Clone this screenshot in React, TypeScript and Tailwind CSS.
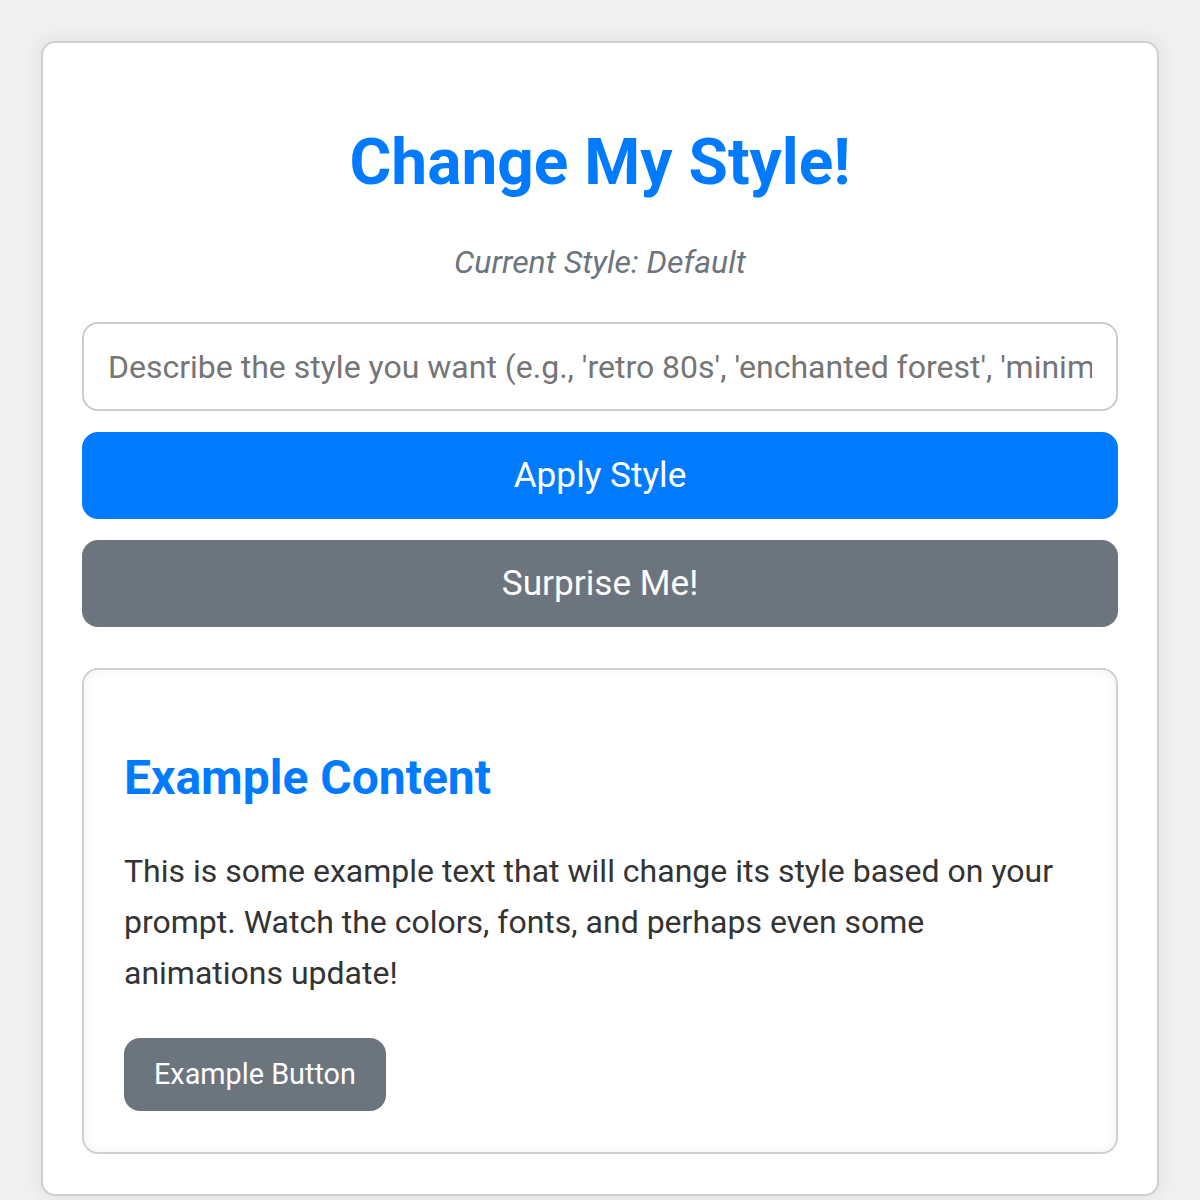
import React from "react";

export default function App() {
  return (
    <div
      className="min-h-[1200px] w-full bg-[#f0f0f0] px-[41px] pt-[41px] pb-[40px]"
      style={{ fontFamily: "Roboto, 'Liberation Sans', sans-serif" }}
    >
      <div className="rounded-[14px] border-2 border-[#cfcfcf] bg-white px-[39px] pt-[40px] pb-[40px] shadow-[0_0_20px_rgba(0,0,0,0.08)]">
        <h1 className="mt-[42px] mb-[43px] text-center text-[64px] leading-[75px] font-bold text-[#007bff]">
          Change My Style!
        </h1>
        <p className="mb-[41px] text-center text-[32px] leading-[38px] italic text-[#6c757d]">
          Current Style: Default
        </p>
        <input
          type="text"
          placeholder="Describe the style you want (e.g., 'retro 80s', 'enchanted forest', 'minimalist dark')"
          className="block h-[89px] w-full rounded-[16px] border-2 border-[#cccccc] bg-white px-[24px] text-[32px] text-[#333] placeholder:text-[#757575] outline-none"
        />
        <button className="mt-[21px] flex h-[87px] w-full items-center justify-center rounded-[16px] bg-[#007bff] text-[35.2px] text-white">
          Apply Style
        </button>
        <button className="mt-[21px] flex h-[87px] w-full items-center justify-center rounded-[16px] bg-[#6c757d] text-[35.2px] text-white">
          Surprise Me!
        </button>
        <div className="mt-[41px] rounded-[16px] border-2 border-[#d0d0d0] bg-white px-[40px] pt-[40px] pb-[41px] shadow-[inset_0_0_12px_rgba(0,0,0,0.06)]">
          <h2 className="mt-[40px] mb-[40px] text-[48px] leading-[56px] font-bold text-[#007bff]">
            Example Content
          </h2>
          <p className="mb-[39px] text-[32px] leading-[51px] text-[#333333]">
            This is some example text that will change its style based on your prompt. Watch the colors, fonts, and perhaps even some animations update!
          </p>
          <button className="flex h-[73px] items-center rounded-[16px] bg-[#6c757d] px-[30px] text-[28.8px] text-white">
            Example Button
          </button>
        </div>
      </div>
    </div>
  );
}
